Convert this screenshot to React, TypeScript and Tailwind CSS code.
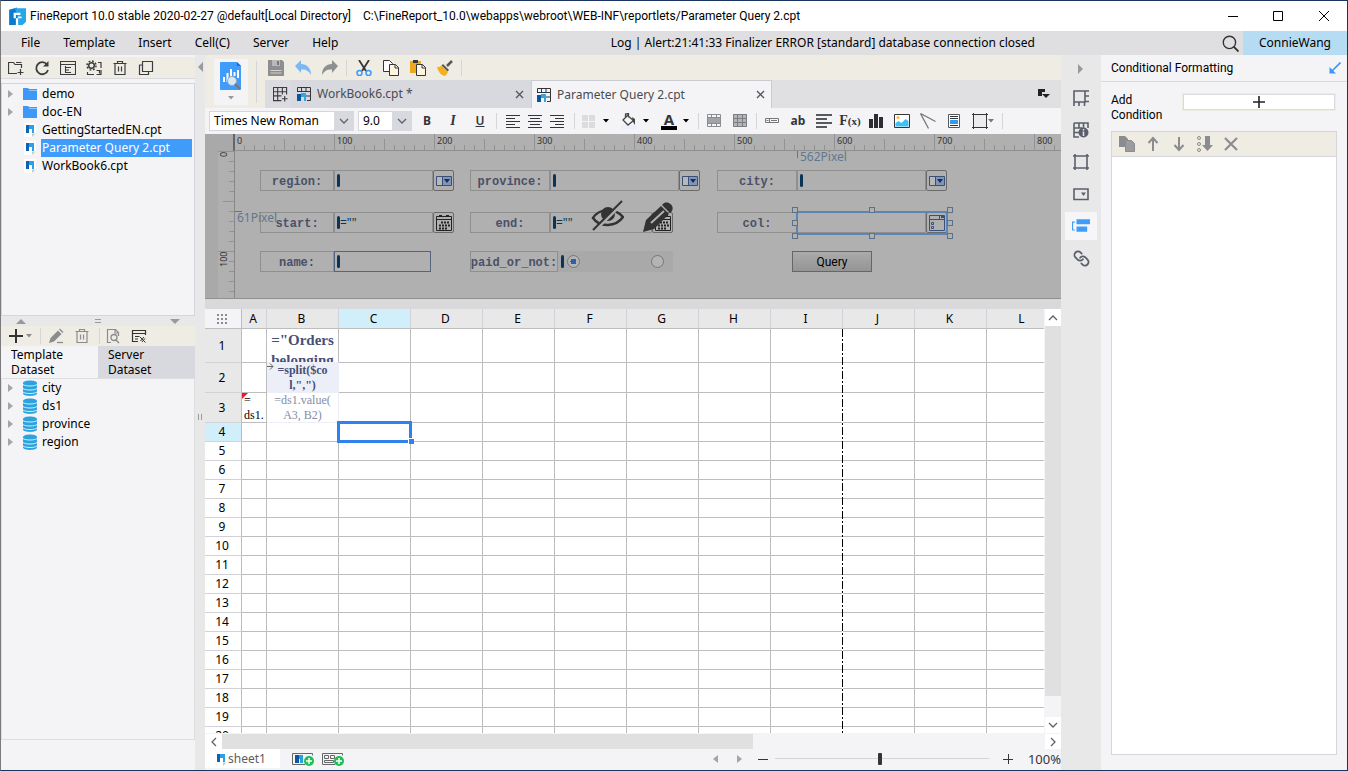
import { useState } from "react";
import type { ReactNode } from "react";
import clsx from "clsx";
import { Link as LinkIcon } from "lucide-react";

type IconProps = { children: ReactNode; size?: number; box?: string; className?: string };

function Icon({ children, size = 16, box = "0 0 16 16", className }: IconProps) {
  return (
    <svg
      width={size}
      height={size}
      viewBox={box}
      fill="none"
      stroke="currentColor"
      className={clsx("shrink-0", className)}
      aria-hidden="true"
    >
      {children}
    </svg>
  );
}

function Sep({ className }: { className?: string }) {
  return <span className={clsx("h-4 w-px shrink-0 bg-[#d6d6da]", className)} />;
}

function Caret({ className }: { className?: string }) {
  return (
    <svg width="6" height="4" viewBox="0 0 6 4" className={clsx("shrink-0 fill-current", className)} aria-hidden="true">
      <path d="M0 0h6L3 3.5z" />
    </svg>
  );
}

type ToolProps = { label: string; width?: string; className?: string; children: ReactNode };

function Tool({ label, width = "w-[26px]", className, children }: ToolProps) {
  return (
    <button
      type="button"
      aria-label={label}
      className={clsx("flex h-5 shrink-0 items-center justify-center", width, className)}
    >
      {children}
    </button>
  );
}

function Logo({ size = 18 }: { size?: number }) {
  return (
    <Icon size={size}>
      <path d="M1 2.500L8 .5V16H1z" fill="#0b7bd0" stroke="none" />
      <path d="M6 1h10v12l-3 3H8V6z" fill="#27a8e6" stroke="none" />
      <path d="M5 5h6v2H7v3H5z" fill="#fff" stroke="none" />
      <path d="M7 10h2v6H7zM9 8.500h3v1.500H9z" fill="#fff" stroke="none" />
    </Icon>
  );
}

function FileIcon() {
  return (
    <Icon size={14} box="0 0 14 14">
      <path d="M1 0h12v10l-4 4H1z" fill="#fff" stroke="none" />
      <path d="M9 14v-3.500h3.500z" fill="#c5c8cf" stroke="none" />
      <path d="M3 2h3v8H3z" fill="#0d63b3" stroke="none" />
      <path d="M6 2h5v8H9V6H6z" fill="#2ba0e6" stroke="none" />
    </Icon>
  );
}

function FolderIcon() {
  return (
    <Icon size={14} box="0 0 14 14">
      <path d="M0 1h5l1 1h8v11H0z" fill="#3d98f7" stroke="none" />
      <path d="M6 3.500h8" stroke="#8fc3fb" />
    </Icon>
  );
}

function DatabaseIcon() {
  return (
    <Icon size={16}>
      <path d="M1 3c0-3.500 14-3.500 14 0v10.500c0 3.200-14 3.200-14 0z" fill="#2ba3df" stroke="none" />
      <path d="M1 4.500c2 2 12 2 14 0M1 8.500c2 2 12 2 14 0M1 12c2 2 12 2 14 0" stroke="#d5eefa" />
    </Icon>
  );
}

function SheetIcon() {
  return (
    <Icon size={14} box="0 0 14 14">
      <path d="M.5 5V.5h13v13H10M.5 4.500h13M4.500.5v4M9 .5V5M9 9h4.500" stroke="#33353a" />
      <path d="M0 7h4v7H0z" fill="#0b55a0" stroke="none" />
      <path d="M4 6h5v8H7v-4H4z" fill="#31a5e5" stroke="none" />
    </Icon>
  );
}

function Chevron({ d, size = 10 }: { d: string; size?: number }) {
  return (
    <Icon size={size} box="0 0 10 10" className="text-[#606268]">
      <path d={d} strokeWidth="1.300" />
    </Icon>
  );
}

function TreeArrow() {
  return (
    <svg width="6" height="8" viewBox="0 0 6 8" className="mr-px ml-[5px] shrink-0" aria-hidden="true">
      <path d="M1 0v8l5-4z" fill="#a5a5a8" />
    </svg>
  );
}

const FILES = [
  { name: "demo", folder: true },
  { name: "doc-EN", folder: true },
  { name: "GettingStartedEN.cpt", folder: false },
  { name: "Parameter Query 2.cpt", folder: false },
  { name: "WorkBook6.cpt", folder: false },
];

const DATASETS = ["city", "ds1", "province", "region"];

function TitleBar() {
  return (
    <header className="flex h-[30px] shrink-0 items-center bg-white pl-[7px] font-['Roboto',sans-serif] text-black">
      <Logo />
      <span className="ml-1 whitespace-nowrap">FineReport 10.0 stable 2020-02-27 @default[Local Directory]</span>
      <span className="ml-3 whitespace-nowrap">
        C:\FineReport_10.0\webapps\webroot\WEB-INF\reportlets/Parameter Query 2.cpt
      </span>
      <div className="ml-auto flex">
        <Tool label="Minimize" width="w-[45px]">
          <Icon size={12} box="0 0 12 12"><path d="M1 6.500h10" /></Icon>
        </Tool>
        <Tool label="Maximize" width="w-[45px]">
          <Icon size={12} box="0 0 12 12"><path d="M1.500 1.500h9v9h-9z" /></Icon>
        </Tool>
        <Tool label="Close" width="w-[47px]">
          <Icon size={12} box="0 0 12 12"><path d="M1 1l10 10M11 1L1 11" /></Icon>
        </Tool>
      </div>
    </header>
  );
}

function MenuBar() {
  return (
    <nav className="flex h-6 shrink-0 items-center bg-[#dfdfe1] text-black">
      <div className="flex gap-[23px] pl-5">
        {["File", "Template", "Insert", "Cell(C)", "Server", "Help"].map((item) => (
          <button key={item} type="button">{item}</button>
        ))}
      </div>
      <span className="mr-[187px] ml-auto whitespace-nowrap">
        Log | Alert:21:41:33 Finalizer ERROR [standard] database connection closed
      </span>
      <button type="button" aria-label="Search" className="mr-1">
        <Icon size={17} className="text-[#333]">
          <circle cx="7" cy="7" r="5.800" strokeWidth="1.300" />
          <path d="M11 11l4.500 4.500" strokeWidth="1.800" />
        </Icon>
      </button>
      <button type="button" className="h-full w-[104px] bg-[#b6dcf3]">ConnieWang</button>
    </nav>
  );
}

function LeftPanel() {
  const [selected, setSelected] = useState("Parameter Query 2.cpt");

  return (
    <aside className="flex w-[194px] shrink-0 flex-col bg-[#f4f4f7]">
      <div className="mt-[2px] flex h-[22px] shrink-0 items-center border-b border-[#d9dadf] bg-[#efece4] pl-[2px] text-[#3c3d42]">
        <Tool label="New folder">
          <Icon><path d="M9 13.500H.5v-11h5l1.500 2h6.500V8M8 2.500h5.500M12.500 9v6M9.500 12.500h6" strokeWidth="1.200" /></Icon>
        </Tool>
        <Tool label="Refresh">
          <Icon><path d="M13 4.500A6 6 0 1 0 14 10" strokeWidth="1.800" /><path d="M14.500 1v5.500H9z" fill="currentColor" stroke="none" /></Icon>
        </Tool>
        <Tool label="Show in directory">
          <Icon><path d="M.5 1.500h15v13H.5zM.5 4.500h15M5.500 6v7M5.500 7.500H11M5.500 10H9M5.500 12.500H11" strokeWidth="1.100" /></Icon>
        </Tool>
        <Tool label="Settings">
          <Icon>
            <circle cx="5.500" cy="5.500" r="2.800" strokeWidth="1.500" />
            <circle cx="5.500" cy="5.500" r="4.500" strokeWidth="1.500" strokeDasharray="1.800 1.730" />
            <path d="M12 2.500h3V8M1.500 12v2.500H8M15 10v4.500h-4.500M10.500 10.500h3v3" strokeWidth="1.200" />
          </Icon>
        </Tool>
        <Tool label="Delete">
          <Icon><path d="M1.500 3.500h13M5.500 3V1.500h5V3M3 3.500v11h10v-11M6.500 6.500v5M9.500 6.500v5" strokeWidth="1.200" /></Icon>
        </Tool>
        <Tool label="Duplicate">
          <Icon><path d="M4.500 1.500h10v10h-10zM4.500 5h-3v9.500h9v-3" strokeWidth="1.200" strokeLinejoin="round" /></Icon>
        </Tool>
      </div>

      <ul className="mt-1 h-[233px] shrink-0 border border-[#d5d6db] pt-px text-black">
        {FILES.map((file) => (
          <li key={file.name} className="flex h-[18px] items-center">
            {file.folder ? <TreeArrow /> : <span className="w-3" />}
            <span className="ml-[9px] flex w-[18px]">{file.folder ? <FolderIcon /> : <FileIcon />}</span>
            <button
              type="button"
              onClick={() => setSelected(file.name)}
              className={clsx(
                "mr-[2px] h-full flex-1 pl-px text-left whitespace-nowrap",
                selected === file.name && "bg-[#409cfa] text-white"
              )}
            >
              {file.name}
            </button>
          </li>
        ))}
      </ul>

      <div className="flex h-[10px] shrink-0 items-center justify-between bg-[#e8e8e8] px-[15px] text-[#9a9a9d]">
        <svg width="10" height="5" viewBox="0 0 10 5" aria-hidden="true"><path d="M0 5h10L5 0z" fill="currentColor" /></svg>
        <svg width="6" height="4" viewBox="0 0 6 4" aria-hidden="true"><path d="M0 .5h6M0 3.500h6" stroke="currentColor" /></svg>
        <svg width="10" height="5" viewBox="0 0 10 5" aria-hidden="true"><path d="M0 0h10L5 5z" fill="currentColor" /></svg>
      </div>

      <div className="flex h-5 shrink-0 items-center bg-[#efece4] pl-[6px] text-[#8b8c90]">
        <Tool label="Add dataset" className="gap-[2px] text-[#333]">
          <Icon><path d="M8 1v14M1 8h14" strokeWidth="2" /></Icon>
          <Caret className="text-[#8b8c90]" />
        </Tool>
        <Sep className="ml-[7px] mr-[2px]" />
        <Tool label="Edit dataset">
          <Icon>
            <path d="M1 15l1.500-5L10 2.500l3.500 3.500L6 13.500zM11 1.500l1-1L15.500 4l-1 1z" fill="currentColor" stroke="none" />
            <path d="M9 14.500h6" strokeWidth="1.300" />
          </Icon>
        </Tool>
        <Tool label="Delete dataset">
          <Icon><path d="M1.500 3.500h13M5.500 3V1.500h5V3M3 3.500v11h10v-11M6.500 6.500v5M9.500 6.500v5" strokeWidth="1.200" /></Icon>
        </Tool>
        <Sep className="ml-1" />
        <Tool label="Preview dataset">
          <Icon>
            <path d="M6 14.500H2.500v-13h8l3 3V8M10 1.500V5h3.500" strokeWidth="1.200" />
            <circle cx="9" cy="9.500" r="3" strokeWidth="1.300" />
            <path d="M11 12l3 3" strokeWidth="1.500" />
          </Icon>
        </Tool>
        <Tool label="Connection" className="text-[#333]">
          <Icon>
            <path d="M7 13.500H1.500v-11h13V7M1.500 5.500h13M4 8.500h4M4 11h3" strokeWidth="1.200" />
            <path d="M8.500 8.500l6 6M9.500 13l3.500-4M11 14l3-3.500" />
          </Icon>
        </Tool>
      </div>

      <div className="grid h-8 shrink-0 grid-cols-2 text-left leading-[15px] text-black">
        <button type="button" className="pr-8 pl-[10px] text-left">Template Dataset</button>
        <button type="button" className="bg-[#d8d9de] pr-8 pl-[10px] text-left">Server Dataset</button>
      </div>

      <ul className="mb-[30px] flex-1 border border-[#dcdde1] text-black">
        {DATASETS.map((name) => (
          <li key={name} className="flex h-[18px] items-center">
            <TreeArrow />
            <span className="ml-2 flex w-5"><DatabaseIcon /></span>
            <span>{name}</span>
          </li>
        ))}
      </ul>
    </aside>
  );
}

function QuickTools() {
  return (
    <div className="flex h-[25px] items-center pl-[5px]">
      <Tool label="Save" width="w-[27px]">
        <Icon className="text-[#8e8e90]">
          <path d="M0 0h14l2 2v14H0z" fill="currentColor" stroke="none" />
          <path d="M4 0v6h8V0" fill="#b9b9b9" stroke="none" />
          <path d="M9 1h2v4H9z" fill="#77787a" stroke="none" />
          <path d="M2.500 10.500h11M2.500 13h11" stroke="#d4d2cc" />
        </Icon>
      </Tool>
      <Tool label="Undo" width="w-[27px]">
        <Icon><path d="M0 6l6-6v4c6 0 10 4 10 11-2-4-5-6-10-5.500V13z" fill="#7cb8f3" stroke="none" /></Icon>
      </Tool>
      <Tool label="Redo" width="w-[27px]">
        <Icon><path d="M16 6l-6-6v4C4 4 0 8 0 15c2-4 5-6 10-5.500V13z" fill="#8e8f91" stroke="none" /></Icon>
      </Tool>
      <Sep className="mx-[3px]" />
      <Tool label="Cut" width="w-[27px]">
        <Icon>
          <path d="M3 0l7 11M13 0L6 11" stroke="#33363a" strokeWidth="1.800" />
          <circle cx="3.500" cy="13" r="2.500" stroke="#3d98f7" strokeWidth="1.500" />
          <circle cx="12.500" cy="13" r="2.500" stroke="#3d98f7" strokeWidth="1.500" />
        </Icon>
      </Tool>
      <Tool label="Copy" width="w-[27px]">
        <Icon className="text-[#33363a]">
          <path d="M.5.5h6l3 3v8h-9z" fill="#fff" />
          <path d="M6.500 4.500h6l3 3v8h-9z" fill="#fdf5e0" />
          <path d="M12 4.500V8h3.500" />
        </Icon>
      </Tool>
      <Tool label="Paste" width="w-[27px]">
        <Icon className="text-[#33363a]">
          <path d="M0 1h11v12H0z" fill="#eba91b" stroke="none" />
          <path d="M3 0h5v3H3z" fill="#33363a" stroke="none" />
          <path d="M6.500 4.500h6l3 3v8h-9z" fill="#fdf5e0" />
          <path d="M12 4.500V8h3.500" />
        </Icon>
      </Tool>
      <Tool label="Format painter" width="w-[27px]">
        <Icon>
          <path d="M15 1l-5 5" stroke="#55585c" strokeWidth="2.500" />
          <path d="M6 4l6 6-1.500 1.500-6-6z" fill="#55585c" stroke="none" />
          <path d="M0 7c2 0 3 0 4.500-1.500L11 12c-1 2-2 3-3 4-3 0-7-4-8-9z" fill="#f5b01d" stroke="none" />
        </Icon>
      </Tool>
      <Sep className="ml-[3px]" />
    </div>
  );
}

function TabClose({ name }: { name: string }) {
  return (
    <button type="button" aria-label={"Close " + name} className="ml-auto">
      <Icon size={9} box="0 0 9 9" className="text-[#55585c]"><path d="M1 1l7 7M8 1L1 8" strokeWidth="1.400" /></Icon>
    </button>
  );
}

function WorkTabs() {
  return (
    <div className="flex h-7 items-center bg-[#e0e0e2] text-[#4a4b50]">
      <Tool label="New report" className="h-full bg-[#dcdce0] pl-1">
        <Icon size={15} className="text-[#3c3d42]">
          <path d="M9 14.500H.5V.5h14V8M.5 5h14M.5 9.500H9M5 .5v14M10 .5V8M12.500 9.500v6M9.500 12.500h6" strokeWidth="1.200" />
        </Icon>
      </Tool>
      <div className="flex h-full w-60 items-center bg-[#d8d9de] pr-[7px] pl-[6px]">
        <SheetIcon />
        <span className="ml-[6px]">WorkBook6.cpt *</span>
        <TabClose name="WorkBook6.cpt" />
      </div>
      <div className="flex h-full w-[241px] items-center border-x border-t border-[#cbccd1] bg-[#f4f4f7] pr-[6px] pl-[5px]">
        <SheetIcon />
        <span className="ml-[6px]">Parameter Query 2.cpt</span>
        <TabClose name="Parameter Query 2.cpt" />
      </div>
      <Tool label="All tabs" className="mr-1 ml-auto text-[#222]">
        <Icon size={12} box="0 0 12 12">
          <path d="M0 1h7v3H4v4H0zM4 6h8L8 10z" fill="currentColor" stroke="none" />
        </Icon>
      </Tool>
    </div>
  );
}

type PickerProps = { label: string; options: string[]; className: string };

function Picker({ label, options, className }: PickerProps) {
  return (
    <div className={clsx("relative h-5 shrink-0", className)}>
      <select
        aria-label={label}
        className="h-5 w-full appearance-none border border-[#d5d6db] bg-white pr-5 pl-1 leading-[18px] text-black"
      >
        {options.map((option) => <option key={option}>{option}</option>)}
      </select>
      <span className="pointer-events-none absolute inset-y-0 right-0 flex w-5 items-center justify-center bg-[#d8d9de]">
        <Chevron d="M1 3l4 4 4-4" />
      </span>
    </div>
  );
}

function FormatBar() {
  return (
    <div className="flex h-[26px] shrink-0 items-center bg-[#f4f4f7] pl-1 text-[#33353a]">
      <Picker label="Font" options={["Times New Roman"]} className="w-[145px]" />
      <Picker label="Font size" options={["9.0"]} className="ml-1 w-[54px]" />
      <Tool label="Bold" className="ml-[2px] font-bold">B</Tool>
      <Tool label="Italic" className="font-['Liberation_Serif'] text-[14px] font-bold italic">I</Tool>
      <Tool label="Underline" width="w-7" className="font-semibold underline">U</Tool>
      <Sep className="ml-[2px] mr-[5px]" />
      <Tool label="Align left" width="w-[22px]">
        <Icon size={14} box="0 0 14 14"><path d="M0 1.500h14M0 4.500h9M0 7.500h14M0 10.500h9M0 13.500h14" /></Icon>
      </Tool>
      <Tool label="Align center" width="w-[22px]">
        <Icon size={14} box="0 0 14 14"><path d="M0 1.500h14M2 4.500h10M0 7.500h14M2 10.500h10M0 13.500h14" /></Icon>
      </Tool>
      <Tool label="Align right" width="w-[22px]">
        <Icon size={14} box="0 0 14 14"><path d="M0 1.500h14M5 4.500h9M0 7.500h14M5 10.500h9M0 13.500h14" /></Icon>
      </Tool>
      <Sep className="ml-[6px] mr-[3px]" />
      <Tool label="Borders" width="w-[34px]" className="gap-2 text-black">
        <Icon size={13} box="0 0 13 13"><path d="M0 0h6v6H0zM7 0h6v6H7zM0 7h6v6H0zM7 7h6v6H7z" fill="#dcdcdf" stroke="none" /></Icon>
        <Caret />
      </Tool>
      <Tool label="Fill color" width="w-[34px]" className="ml-[6px] gap-[6px] text-black">
        <Icon>
          <path d="M0 12h16v4H0z" fill="#eceffb" stroke="none" />
          <path d="M6.500 2.500l6 5-5.500 4.500-5-5zM4.500 5V1l3-.5v4" stroke="#44464b" strokeWidth="1.300" />
          <path d="M11 4l3 2v6l-2-3z" fill="#44464b" stroke="none" />
        </Icon>
        <Caret />
      </Tool>
      <Tool label="Font color" width="w-[34px]" className="ml-[6px] gap-[6px] text-black">
        <span className="flex w-4 flex-col items-center border-b-4 border-black text-[15px] leading-[13px] font-bold text-[#33353a]">A</span>
        <Caret />
      </Tool>
      <Sep className="ml-[6px] mr-[2px]" />
      <Tool label="Merge cells" className="text-[#8b8c90]">
        <Icon size={14} box="0 0 14 14">
          <path d="M.5.5h13v12H.5zM0 3.500h14M0 9.500h14M4.500 0v3M9.500 0v3M4.500 10v3M9.500 10v3" />
          <path d="M1 4h12v5H1z" fill="#a2a3a6" stroke="none" />
        </Icon>
      </Tool>
      <Tool label="Unmerge cells" className="text-[#8b8c90]">
        <Icon size={14} box="0 0 14 14">
          <path d="M0 0h14v13H0z" fill="#b4b5b8" stroke="none" />
          <path d="M.5.5h13v12H.5zM0 4.500h14M0 8.500h14M4.500 0v13M9.500 0v13" stroke="#7d7e82" />
        </Icon>
      </Tool>
      <Sep className="ml-[3px] mr-[2px]" />
      <Tool label="Cell element" className="text-[#77787c]">
        <Icon size={14} box="0 0 14 14"><path d="M.5 4.500h13v4H.5zM4.500 4.500v4M6 6.500h6M1.500 6.500h2" /></Icon>
      </Tool>
      <Tool label="Insert text" className="font-bold">ab</Tool>
      <Tool label="Insert rich text">
        <Icon><path d="M0 2h16M0 6h11M0 10h16M0 14h11" strokeWidth="1.800" className="text-[#55585c]" /></Icon>
      </Tool>
      <Tool label="Insert formula" className="font-['Liberation_Serif'] text-[14px] font-bold">
        F<span className="text-[11px]">(x)</span>
      </Tool>
      <Tool label="Insert chart">
        <Icon size={14} box="0 0 14 14"><path d="M0 5h4v9H0zM5 0h4v14H5zM10 3h4v11h-4z" fill="#2c2e33" stroke="none" /></Icon>
      </Tool>
      <Tool label="Insert image">
        <Icon>
          <path d="M.5 1.500h15v13H.5z" fill="#fff" />
          <circle cx="4" cy="4.500" r="1.500" fill="#f9b936" stroke="none" />
          <path d="M1.500 10l3-2 3 2 4-4 3 2v5.500h-13z" fill="#3fc0f5" stroke="none" />
        </Icon>
      </Tool>
      <Tool label="Insert slope line" className="text-[#77787c]">
        <Icon><path d="M.5.500l15 8M.5.5l8 15" strokeWidth="1.300" /></Icon>
      </Tool>
      <Tool label="Insert sub report">
        <Icon size={14} box="0 0 14 14">
          <path d="M1.500.5h11v13h-11z" fill="#fff" stroke="#55585c" />
          <path d="M3 2.500h8M3 4.500h8M3 11.500h8" />
          <path d="M3 6h8v4H3z" fill="#2d9cf0" stroke="none" />
        </Icon>
      </Tool>
      <Tool label="Insert float element">
        <Icon>
          <path d="M1.500 1.500h13v13h-13z" fill="#ececed" />
          <path d="M0 1.500h16M0 14.500h16M1.500 0v16M14.500 0v16" />
        </Icon>
        <Caret className="-mr-[6px] text-[#77787c]" />
      </Tool>
      <Sep className="ml-[9px]" />
    </div>
  );
}

function RulerTop() {
  const ticks = Array.from({ length: 83 }, (_, i) => i);
  return (
    <div className="h-[17px] flex-1 overflow-hidden border-b border-[#8f8f8f]">
      <svg width="830" height="16" viewBox="0 0 830 16" aria-hidden="true">
        {ticks.map((i) => (
          <path
            key={i}
            d={`M${i * 10 + 0.5} ${i % 10 === 0 ? 0 : i % 5 === 0 ? 5 : 11}V16`}
            stroke={i === 0 ? "#666" : "#929292"}
          />
        ))}
        {[0, 100, 200, 300, 400, 500, 600, 700, 800].map((value) => (
          <text key={value} x={value + 3} y="10" fontSize="9" fill="#333">{value}</text>
        ))}
      </svg>
    </div>
  );
}

function RulerLeft() {
  const ticks = Array.from({ length: 15 }, (_, i) => i);
  return (
    <svg width="30" height="147" viewBox="0 0 30 147" className="shrink-0" aria-hidden="true">
      <path d="M0 0h13v147H0z" fill="#a9a9a9" />
      {ticks.map((i) => (
        <path
          key={i}
          d={`M${i % 10 === 0 ? 13 : i % 5 === 0 ? 18 : 24} ${i * 10 + 0.5}H30`}
          stroke="#929292"
        />
      ))}
      <path d="M29.500 0v147" stroke="#888" />
      <text transform="translate(22 6) rotate(-90)" fontSize="9" fill="#333">0</text>
      <text transform="translate(22 116) rotate(-90)" fontSize="9" fill="#333">100</text>
    </svg>
  );
}

function DropGlyph() {
  return (
    <svg width="16" height="10" viewBox="0 0 16 10" aria-hidden="true">
      <path d="M.5.5h15v9H.5z" fill="#b8b8b8" stroke="#3a5078" />
      <path d="M7 1h8v8H7z" fill="#8196b4" />
      <path d="M6.500 0v10" stroke="#3a5078" />
      <path d="M8 3h6l-3 4z" fill="#142d63" />
    </svg>
  );
}

function CalendarGlyph() {
  return (
    <Icon className="text-[#222]">
      <path d="M.5 1.500h15v14H.5zM0 4.500h16" />
      <path d="M5 7.500h9M3 10.500h11M3 13.500h8" strokeWidth="2" strokeDasharray="2 1" />
      <path d="M3 .5h3M10 .5h3" />
    </Icon>
  );
}

function CheckListGlyph() {
  return (
    <Icon className="text-[#3a5078]">
      <path d="M.5.5h15v15H.5zM0 4.500h16M10.500 0v4M2.500 7.500h2v2h-2zM2.500 11.500h2v2h-2z" />
      <path d="M12 1h3v2h-3z" fill="currentColor" stroke="none" />
    </Icon>
  );
}

type WidgetProps = {
  label: string;
  labelWidth: string;
  fieldWidth: string;
  place: string;
  value?: string;
  glyph?: ReactNode;
  plain?: boolean;
};

function Widget({ label, labelWidth, fieldWidth, place, value, glyph, plain }: WidgetProps) {
  const id = "param-" + label;
  return (
    <div className={clsx("absolute flex h-[21px]", place)}>
      <label
        htmlFor={id}
        className={clsx(
          "flex items-center justify-center border border-[#8f8f8f] pt-[2px] font-['Liberation_Mono'] font-bold text-[#4a5068]",
          labelWidth
        )}
      >
        {label}:
      </label>
      <div className={clsx("flex items-center border pl-[2px]", fieldWidth, plain ? "border-[#566480]" : "border-[#8f8f8f]")}>
        {label !== "col" && <span className="h-[13px] w-[3px] shrink-0 rounded-sm bg-[#0c3457]" />}
        <input id={id} defaultValue={value} className="h-full w-full min-w-0 bg-transparent text-[12px] text-[#0c3457]" />
      </div>
      {glyph && (
        <button
          type="button"
          aria-label={"Open " + label}
          className="flex w-[21px] shrink-0 items-center justify-center rounded-[2px] border border-[#6a6a6a]"
        >
          {glyph}
        </button>
      )}
    </div>
  );
}

const HANDLES = [
  "left-[557px] top-[56px]",
  "left-[634px] top-[56px]",
  "left-[712px] top-[56px]",
  "left-[557px] top-[69px]",
  "left-[712px] top-[69px]",
  "left-[557px] top-[82px]",
  "left-[634px] top-[82px]",
  "left-[712px] top-[82px]",
];

// Free canvas: widgets sit at the coordinates shown on the rulers.
function ParameterCanvas() {
  return (
    <div className="relative min-w-0 flex-1 text-[12px]">
      <Widget label="region" place="left-[25px] top-[19px]" labelWidth="w-[74px]" fieldWidth="w-[99px]" glyph={<DropGlyph />} />
      <Widget label="province" place="left-[235px] top-[19px]" labelWidth="w-[80px]" fieldWidth="w-[129px]" glyph={<DropGlyph />} />
      <Widget label="city" place="left-[482px] top-[19px]" labelWidth="w-[80px]" fieldWidth="w-[129px]" glyph={<DropGlyph />} />
      <Widget label="start" place="left-[25px] top-[61px]" labelWidth="w-[74px]" fieldWidth="w-[99px]" value={'=""'} glyph={<CalendarGlyph />} />
      <Widget label="end" place="left-[235px] top-[61px]" labelWidth="w-[80px]" fieldWidth="w-[102px]" value={'=""'} glyph={<CalendarGlyph />} />
      <Widget label="col" place="left-[482px] top-[61px]" labelWidth="w-[80px]" fieldWidth="w-[129px]" glyph={<CheckListGlyph />} />
      <Widget label="name" place="left-[25px] top-[100px]" labelWidth="w-[74px]" fieldWidth="w-[97px]" plain />

      <fieldset className="absolute top-[100px] left-[235px] flex h-[21px] w-[203px] items-center bg-[#a9a9a9]">
        <legend className="float-left flex h-[21px] w-[88px] items-center justify-center border border-[#8f8f8f] bg-[#b0b0b0] pt-[2px] font-['Liberation_Mono'] font-bold text-[#4a5068]">
          paid_or_not:
        </legend>
        <span className="ml-[3px] h-[13px] w-[3px] rounded-sm bg-[#0c3457]" />
        <input
          type="radio"
          name="paid"
          aria-label="Paid"
          defaultChecked
          className="ml-[3px] size-[13px] appearance-none rounded-full border border-[#777] bg-[#b4b4b4] checked:bg-[radial-gradient(circle,#2c62ad_0_3px,#b4b4b4_3px)]"
        />
        <input
          type="radio"
          name="paid"
          aria-label="Not paid"
          className="mr-[9px] ml-auto size-[13px] appearance-none rounded-full border border-[#777] bg-[#b4b4b4] checked:bg-[radial-gradient(circle,#2c62ad_0_3px,#b4b4b4_3px)]"
        />
      </fieldset>

      <button
        type="button"
        className="absolute top-[100px] left-[557px] h-[21px] w-20 border border-[#666] bg-linear-to-b from-[#ababab] to-[#949494] font-['Roboto',sans-serif] text-black"
      >
        Query
      </button>

      <div className="pointer-events-none absolute top-[60px] left-[561px] h-[24px] w-[152px] border-2 border-[#5d84b3]" />
      {HANDLES.map((place) => (
        <span key={place} className={clsx("absolute size-[6px] border border-[#5a7186] bg-[#b0b0b0]", place)} />
      ))}
      <span className="absolute top-0 left-[562px] h-[7px] border-l border-[#5f7890] pl-[2px] leading-[12px] text-[#5f7890]">562Pixel</span>
      <span className="absolute top-[60px] left-0 w-[7px] border-t border-[#5f7890] pl-[2px] leading-[12px] text-[#5f7890]">61Pixel</span>

      <div className="absolute top-[49px] left-[356px] flex gap-[18px] text-[#333]">
        <button type="button" aria-label="Hide parameter panel">
          <Icon size={33} box="0 0 33 33">
            <path d="M2 18C8 8 24 8 32 17 25 27 9 28 2 18z" strokeWidth="2.500" />
            <circle cx="17" cy="14" r="7" fill="currentColor" stroke="none" />
            <path d="M5 29.500L33 2" stroke="#b0b0b0" strokeWidth="3" />
            <path d="M2 30L31 1" strokeWidth="2" />
          </Icon>
        </button>
        <button type="button" aria-label="Edit parameter panel">
          <Icon size={32} box="0 0 32 32">
            <path d="M1 31l3-12L19 5l8 8L12 28zM21 3c4-4 12 1 9 7l-2 2-8-8z" fill="currentColor" stroke="none" />
            <path d="M9 22L22 10" stroke="#b0b0b0" strokeWidth="2" />
          </Icon>
        </button>
      </div>
    </div>
  );
}

function ParameterPane() {
  return (
    <section className="shrink-0 border-b border-[#909090] bg-[#b0b0b0]">
      <div className="flex">
        <div className="h-[17px] w-[29px] shrink-0 border-r border-[#666] bg-[#a9a9a9]" />
        <RulerTop />
      </div>
      <div className="flex h-[147px]">
        <RulerLeft />
        <ParameterCanvas />
      </div>
    </section>
  );
}

const COLUMNS = ["A", "B", "C", "D", "E", "F", "G", "H", "I", "J", "K", "L"];
const ROWS = Array.from({ length: 20 }, (_, i) => i + 1);

function rowHeight(row: number) {
  if (row === 1) return "h-[34px]";
  if (row === 2 || row === 3) return "h-[30px]";
  return "h-[19px]";
}

function CellContent({ id }: { id: string }) {
  switch (id) {
    case "B1":
      return (
        <div className="h-[33px] overflow-hidden pt-px text-center font-['Liberation_Serif'] text-[15px] leading-[20px] font-bold text-[#465078]">
          ="Orders<br />belonging
        </div>
      );
    case "B2":
      return (
        <div className="relative h-[29px] bg-[#eceff8] text-center font-['Liberation_Serif'] leading-[15px] font-bold text-[#465078]">
          <Icon size={7} box="0 0 7 7" className="absolute top-0 left-0 text-[#666]"><path d="M0 3.500h6M3 .5l3 3-3 3" /></Icon>
          =split($co<br />l,",")
        </div>
      );
    case "A3":
      return (
        <div className="relative h-[29px] pl-[2px] font-['Liberation_Serif'] leading-[15px] whitespace-nowrap text-black">
          <Icon size={6} box="0 0 6 6" className="absolute top-0 left-0"><path d="M0 0h6L0 6z" fill="#e8173c" stroke="none" /></Icon>
          =<br />ds1.
        </div>
      );
    case "B3":
      return (
        <div className="h-[29px] text-center font-['Liberation_Serif'] leading-[15px] text-[#848da3]">
          =ds1.value(<br />A3, B2)
        </div>
      );
    case "C4":
      return (
        <div className="relative h-[18px]">
          <div className="absolute -top-[2px] -left-[2px] h-[22px] w-[75px] border-3 border-[#2f81ee]" />
          <div className="absolute top-[15px] left-[69px] size-[6px] border-t border-l border-white bg-[#2f81ee]" />
        </div>
      );
    default:
      return null;
  }
}

function Spreadsheet() {
  return (
    <div className="relative min-w-0 flex-1 overflow-hidden bg-white">
      <table className="w-[854px] table-fixed border-separate border-spacing-0 text-black">
        <colgroup>
          <col className="w-[37px]" />
          <col className="w-[25px]" />
          {COLUMNS.slice(1).map((name) => <col key={name} className="w-[72px]" />)}
        </colgroup>
        <thead>
          <tr className="h-5">
            <th aria-label="Select all" className="border-r border-b border-[#bdbdbd] bg-[#f4f4f7] p-0 pr-[3px]">
              <Icon size={10} box="0 0 10 10" className="mx-auto text-[#8b8c90]">
                <path d="M0 1h10M0 5h10M0 9h10" strokeWidth="2" strokeDasharray="2 2" />
              </Icon>
            </th>
            {COLUMNS.map((name) => (
              <th
                key={name}
                scope="col"
                className={clsx(
                  "border-r border-b border-r-[#d2d2d6] border-b-[#bdbdbd] p-0 pt-px pr-[2px] leading-[18px] font-normal",
                  name === "C" ? "bg-[#d0effb]" : "bg-[#e8e8e8]"
                )}
              >
                {name}
              </th>
            ))}
          </tr>
        </thead>
        <tbody>
          {ROWS.map((row) => (
            <tr key={row} className={rowHeight(row)}>
              <th
                scope="row"
                className={clsx(
                  "border-r border-b border-r-[#bdbdbd] border-b-[#d2d2d6] p-0 pr-[2px] leading-[18px] font-normal",
                  row < 4 ? "bg-[#e8e8e8]" : row === 4 ? "bg-[#d0effb]" : "bg-white"
                )}
              >
                {row}
              </th>
              {COLUMNS.map((name) => (
                <td
                  key={name}
                  className={clsx(
                    "border-r border-b p-0 align-top",
                    name === "B" && row < 4 ? "border-b-[#eceff8]" : "border-b-[#bdbdbd]",
                    name === "B" && (row === 2 || row === 3) ? "border-r-[#eceff8]" : "border-r-[#bdbdbd]"
                  )}
                >
                  <CellContent id={name + row} />
                </td>
              ))}
            </tr>
          ))}
        </tbody>
      </table>
      {/* page break guide on the right edge of column I */}
      <div className="absolute top-5 bottom-0 left-[637px] w-px bg-[repeating-linear-gradient(to_bottom,#000_0_8px,#fff_8px_10px,#000_10px_12px,#fff_12px_14px)]" />
    </div>
  );
}

function SheetBar() {
  return (
    <footer className="flex h-[21px] shrink-0 items-center bg-[#f4f4f7] pb-[2px] text-[#5c5d62]">
      <button type="button" className="flex h-[19px] w-[75px] items-center bg-white pl-[9px] text-[12px]">
        <FileIcon />
        sheet1
      </button>
      <Tool label="Add report sheet" width="w-[22px]" className="ml-3">
        <svg width="22" height="14" viewBox="0 0 22 14" aria-hidden="true">
          <path d="M.5 1.500h20v2M.5 1.500v11H13" fill="none" stroke="#666" />
          <path d="M3 3h4v8H3z" fill="#0d55a0" />
          <path d="M7 3h4v8H8V7H7z" fill="#27a0e0" />
          <circle cx="17" cy="9" r="5" fill="#1fbf55" />
          <path d="M14 9h6M17 6v6" stroke="#fff" strokeWidth="1.500" />
        </svg>
      </Tool>
      <Tool label="Add form sheet" width="w-[22px]" className="ml-2">
        <svg width="22" height="14" viewBox="0 0 22 14" aria-hidden="true">
          <path d="M.5 1.500h20v2M.5 1.500v11H13M2.500 3.500h4v3h-4zM8.500 3.500h4v3h-4zM2.500 8.500h9v2h-9z" fill="none" stroke="#666" />
          <circle cx="17" cy="9" r="5" fill="#1fbf55" />
          <path d="M14 9h6M17 6v6" stroke="#fff" strokeWidth="1.500" />
        </svg>
      </Tool>
      <div className="ml-auto flex items-center text-[#33353a]">
        <Tool label="Previous sheet" width="w-6">
          <svg width="5" height="8" viewBox="0 0 5 8" aria-hidden="true"><path d="M5 0v8L0 4z" fill="#a5a5a8" /></svg>
        </Tool>
        <Tool label="Next sheet" width="w-6">
          <svg width="5" height="8" viewBox="0 0 5 8" aria-hidden="true"><path d="M0 0v8l5-4z" fill="#a5a5a8" /></svg>
        </Tool>
        <Tool label="Zoom out" width="w-6">
          <Icon size={10} box="0 0 10 10"><path d="M0 5.500h10" /></Icon>
        </Tool>
        <input
          type="range"
          aria-label="Zoom"
          min="0"
          max="100"
          defaultValue="49"
          className="h-3 w-[214px] appearance-none bg-[linear-gradient(#d4d4d7,#d4d4d7)] bg-[length:100%_1px] bg-center bg-no-repeat [&::-webkit-slider-thumb]:h-3 [&::-webkit-slider-thumb]:w-1 [&::-webkit-slider-thumb]:appearance-none [&::-webkit-slider-thumb]:rounded-[1px] [&::-webkit-slider-thumb]:bg-[#33353a]"
        />
        <Tool label="Zoom in" width="w-[38px]">
          <Icon size={10} box="0 0 10 10"><path d="M0 5.500h10M5.500 0v10" /></Icon>
        </Tool>
        <span className="w-[34px] text-right text-[13px]">100%</span>
      </div>
    </footer>
  );
}

function Workspace() {
  return (
    <main className="flex min-w-0 flex-1 flex-col">
      <div className="flex h-[53px] shrink-0 bg-[#efece4]">
        <button
          type="button"
          aria-label="Preview"
          className="mt-1 ml-[9px] flex h-[46px] w-[34px] shrink-0 flex-col items-center justify-between bg-[#f4f4f7] pt-[3px] pb-[5px] text-[#9a9a9d]"
        >
          <svg width="22" height="28" viewBox="0 0 22 28" aria-hidden="true">
            <path d="M0 1Q0 0 1 0h16l4 4v23q0 1-1 1H1q-1 0-1-1z" fill="#409cfa" />
            <path d="M17 0v4h4z" fill="#1e70c8" />
            <path d="M4 20v-5M7.500 20V11M11 18V7M14.500 14V10M18 16V8" stroke="#fff" strokeWidth="2" />
            <circle cx="12" cy="19" r="4.500" fill="#d9e8f5" stroke="#9aa7b3" />
            <path d="M15 22l5 5" stroke="#777" strokeWidth="2" />
          </svg>
          <Caret />
        </button>
        <Sep className="mt-[6px] ml-2 h-[42px]" />
        <div className="flex min-w-0 flex-1 flex-col">
          <QuickTools />
          <div className="ml-2">
            <WorkTabs />
          </div>
        </div>
      </div>
      <FormatBar />
      <ParameterPane />
      <div className="h-[10px] shrink-0 bg-[#d9d9dc]" />
      <div className="flex min-h-0 flex-1">
        <Spreadsheet />
        <div className="flex w-[17px] shrink-0 flex-col bg-[#f4f4f7] pl-px">
          <button type="button" aria-label="Scroll up" className="flex h-[17px] items-center justify-center bg-white">
            <Chevron d="M1 7l4-4 4 4" />
          </button>
          <div className="mb-[21px] flex-1 bg-[#e0e0e0]" />
          <button type="button" aria-label="Scroll down" className="flex h-4 items-center justify-center bg-white">
            <Chevron d="M1 3l4 4 4-4" />
          </button>
        </div>
      </div>
      <div className="flex h-4 shrink-0 bg-[#f4f4f7] pt-px">
        <button type="button" aria-label="Scroll left" className="flex w-[17px] items-center justify-center bg-white">
          <Chevron d="M7 1L3 5l4 4" />
        </button>
        <div className="flex-1">
          <div className="h-full w-[64.5%] bg-[#e0e0e0]" />
        </div>
        <button type="button" aria-label="Scroll right" className="flex w-4 items-center justify-center bg-white">
          <Chevron d="M3 1l4 4-4 4" />
        </button>
      </div>
      <SheetBar />
    </main>
  );
}

const SIDE_TOOLS = [
  { label: "Cell element", d: "M1 1h11v11H1zM1 12v4M6 12v4M11.500 12v4M12 1h4M12 6h4M12 11.500h4" },
  { label: "Cell attributes", d: "M1 1h14v5M1 1v14h5M1 6h8M1 10.500h5M6 1v5M10.500 1v5" },
  { label: "Float element", d: "M2 0v16M14 0v16M0 2h16M0 14h16" },
  { label: "Widget settings", d: "M1 3h14v10.500H1z" },
  { label: "Condition attributes", d: "" },
];

function SideStrip() {
  return (
    <div className="flex w-10 shrink-0 flex-col items-center bg-[#e8e8e8] text-[#5b5f6b]">
      <button type="button" aria-label="Collapse panel" className="flex h-[27px] w-full items-center justify-center">
        <svg width="6" height="10" viewBox="0 0 6 10" aria-hidden="true"><path d="M0 0v10l5-5z" fill="#9a9a9d" /></svg>
      </button>
      {SIDE_TOOLS.map((tool, index) => (
        <button
          key={tool.label}
          type="button"
          aria-label={tool.label}
          className={clsx("my-[2px] flex h-7 w-8 items-center justify-center", index === 4 && "bg-[#f6f6f9]")}
        >
          <Icon size={index === 4 ? 18 : 16} className={index === 4 ? "text-[#409cfa]" : undefined}>
            <path d={tool.d} strokeWidth="1.600" />
            {index === 1 && (
              <>
                <circle cx="10.500" cy="10.500" r="5" fill="currentColor" stroke="none" />
                <path d="M10.500 7v1.500M10.500 9.500V14" stroke="#e8e8e8" strokeWidth="1.500" />
              </>
            )}
            {index === 3 && <path d="M8 6.500h5L10.500 10z" fill="currentColor" stroke="none" />}
            {index === 4 && (
              <>
                <path d="M4 2h12v4.500H4zM4 8.500h9.500V13H4z" fill="currentColor" stroke="none" />
                <path d="M2.500 4.500h-2v7h2" />
              </>
            )}
          </Icon>
        </button>
      ))}
      <button type="button" aria-label="Hyperlink" className="my-[2px] flex h-7 w-8 items-center justify-center">
        <LinkIcon size={17} strokeWidth={2.5} className="-scale-x-100" />
      </button>
    </div>
  );
}

function ConditionPanel() {
  return (
    <aside className="flex w-[246px] shrink-0 flex-col bg-[#f4f4f7] font-['Roboto',sans-serif] text-black">
      <div className="flex h-[27px] shrink-0 items-center border-b border-[#d9dadf] pr-[6px] pl-[10px]">
        <h2>Conditional Formatting</h2>
        <button type="button" aria-label="Detach panel" className="ml-auto">
          <Icon size={12} box="0 0 12 12" className="text-[#3d98f7]">
            <path d="M11.500.5L3 9" strokeWidth="1.700" />
            <path d="M.5 5v6.500H7z" fill="currentColor" stroke="none" />
          </Icon>
        </button>
      </div>
      <div className="flex shrink-0 items-start pt-[11px] pr-3 pl-[10px]">
        <span id="add-condition" className="w-[72px] pr-2 leading-[15px]">Add Condition</span>
        <button
          type="button"
          aria-labelledby="add-condition"
          className="mt-px flex h-4 flex-1 items-center justify-center border border-[#d9dadf] bg-white outline-1 outline-[#efece4]"
        >
          <Icon size={12} box="0 0 12 12" className="text-[#222]"><path d="M6 0v12M0 6h12" strokeWidth="1.600" /></Icon>
        </button>
      </div>
      <div className="mx-[10px] mt-2 mb-[15px] flex min-h-0 flex-1 flex-col border border-[#d5d6db] bg-white">
        <div className="flex h-[25px] shrink-0 items-center border-b border-[#d5d6db] bg-[#efece4] pl-[2px] text-[#8b8c90]">
          <Tool label="Copy condition">
            <Icon>
              <path d="M0 0h6l3 3v8H0z" fill="currentColor" stroke="none" />
              <path d="M6.500 4.500h6l3 3v8h-9z" fill="#9b9c9e" />
            </Icon>
          </Tool>
          <Tool label="Move up">
            <Icon><path d="M8 15V3M3.500 7L8 2l4.500 5" strokeWidth="2" /></Icon>
          </Tool>
          <Tool label="Move down">
            <Icon><path d="M8 1v12M3.500 9L8 14l4.500-5" strokeWidth="2" /></Icon>
          </Tool>
          <Tool label="Sort">
            <Icon>
              <circle cx="2" cy="2" r="1.500" />
              <circle cx="2" cy="8" r="1.500" />
              <circle cx="2" cy="14" r="1.500" />
              <path d="M8 0h5v9h3l-5.500 6L5 9h3z" fill="currentColor" stroke="none" />
            </Icon>
          </Tool>
          <Tool label="Remove condition">
            <Icon><path d="M2 2l12 12M14 2L2 14" strokeWidth="2.200" /></Icon>
          </Tool>
        </div>
      </div>
    </aside>
  );
}

export default function App() {
  return (
    <div className="flex h-screen flex-col overflow-hidden border border-[#1c3560] border-l-[#7c7a7a] bg-[#f4f4f7] font-['Noto_Sans',sans-serif] text-[12px] leading-[16px]">
      <TitleBar />
      <MenuBar />
      <div className="flex min-h-0 flex-1">
        <LeftPanel />
        <div className="flex w-[10px] shrink-0 flex-col items-center justify-between bg-[#e8e8e8] pt-[7px] pb-[350px]">
          <svg width="5" height="10" viewBox="0 0 5 10" aria-hidden="true"><path d="M5 0v10L0 5z" fill="#9a9a9d" /></svg>
          <svg width="4" height="6" viewBox="0 0 4 6" aria-hidden="true"><path d="M.5 0v6M3.500 0v6" stroke="#9a9a9d" /></svg>
        </div>
        <Workspace />
        <SideStrip />
        <ConditionPanel />
      </div>
    </div>
  );
}
